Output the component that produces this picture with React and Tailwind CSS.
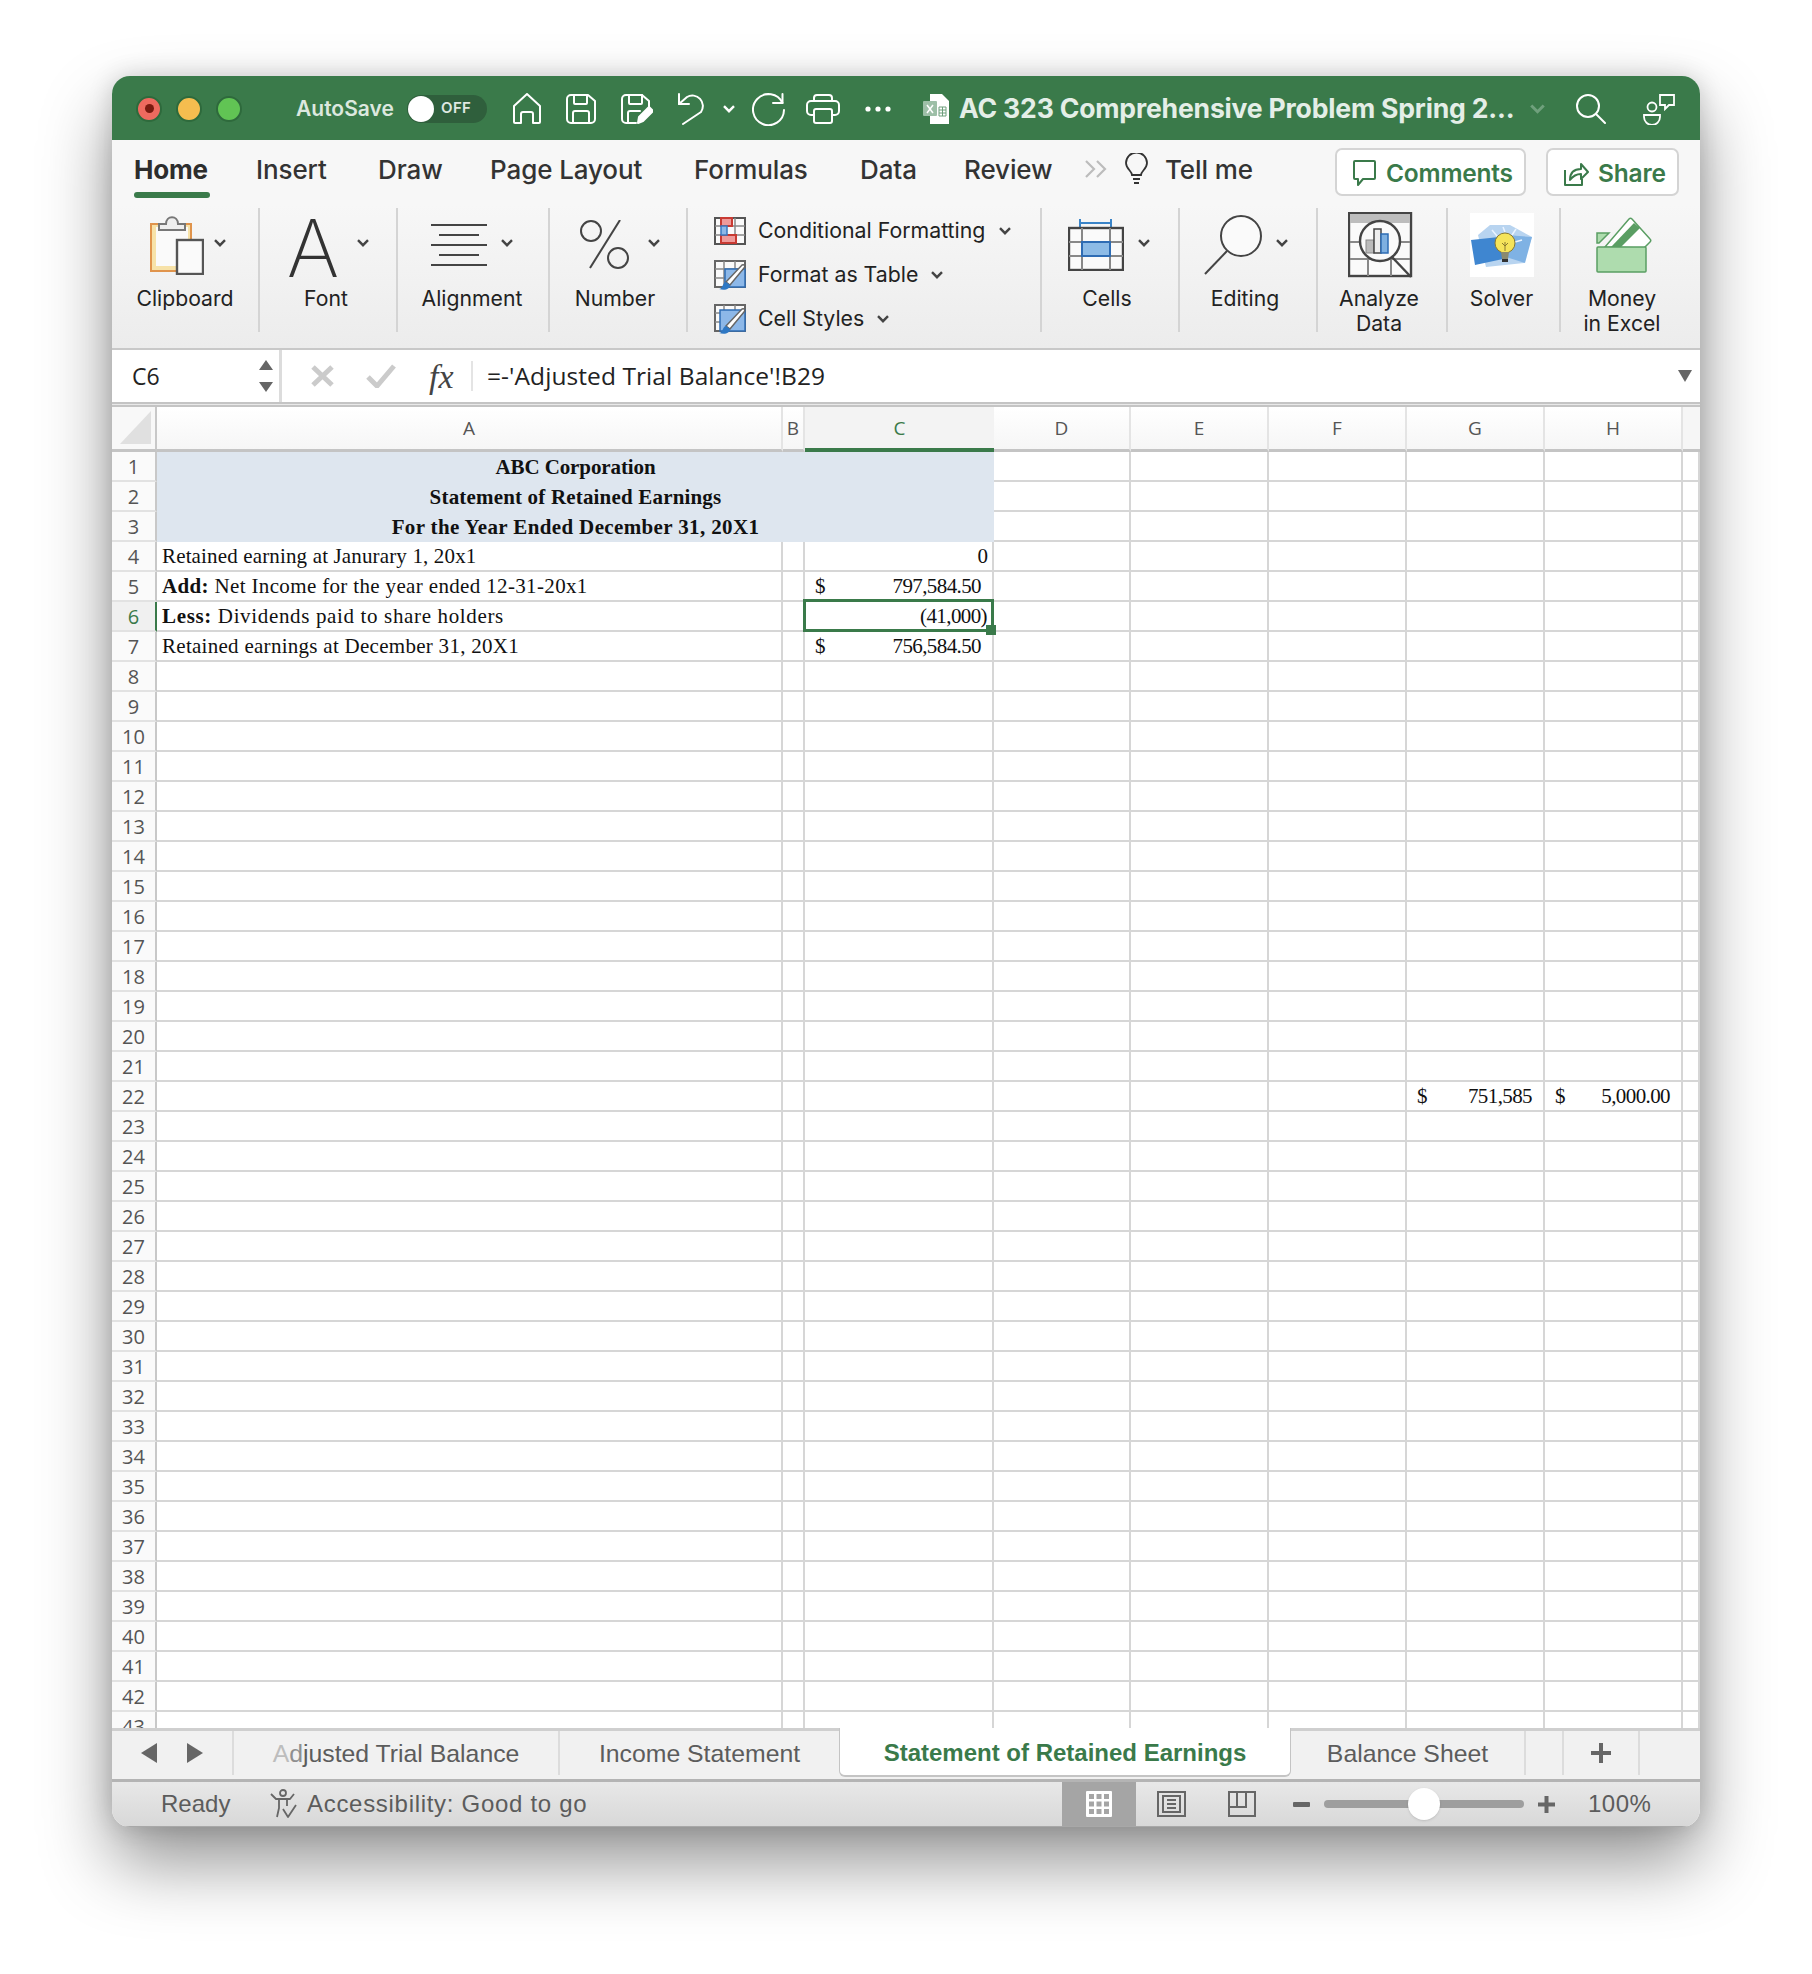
const rowNumbers = Array.from({ length: 43 }, (_, i) => i + 1);

const gridCols = "grid grid-cols-[45px_626px_22px_189px_137px_138px_138px_138px_138px_17px]";
const cellLine = "border-r-2 border-b-2 border-[#d6d6d6]";

function Chevron({ className = "", color = "#444" }) {
  return (
    <svg width="12" height="8" viewBox="0 0 12 8" className={className}>
      <path d="M1 1.2l5 5 5-5" fill="none" stroke={color} strokeWidth="2.4" />
    </svg>
  );
}

function TrafficLights() {
  return (
    <div className="flex gap-[14px] ml-[24px]">
      <div className="w-[26px] h-[26px] rounded-full bg-[#ee6a5f] border-2 border-[#2e6a3c] flex items-center justify-center">
        <div className="w-[9px] h-[9px] rounded-full bg-[#7a1a10]" />
      </div>
      <div className="w-[26px] h-[26px] rounded-full bg-[#f5bd4f] border-2 border-[#2e6a3c]" />
      <div className="w-[26px] h-[26px] rounded-full bg-[#61c454] border-2 border-[#2e6a3c]" />
    </div>
  );
}

function QuickIcons() {
  const s = { fill: "none", stroke: "#fff", strokeWidth: 2, strokeLinejoin: "round", strokeLinecap: "round" };
  return (
    <div className="flex items-center">
      <svg width="30" height="32" viewBox="0 0 30 32" className="ml-[25px]" {...s}>
        <path d="M2 29V13L15 1l13 12v16a1 1 0 0 1-1 1h-6v-9a2 2 0 0 0-2-2h-8a2 2 0 0 0-2 2v9H3a1 1 0 0 1-1-1z" />
      </svg>
      <svg width="30" height="30" viewBox="0 0 30 30" className="ml-[24px]" {...s}>
        <path d="M5 1h17l7 6v18a4 4 0 0 1-4 4H5a4 4 0 0 1-4-4V5a4 4 0 0 1 4-4z" />
        <path d="M8 1v8a1 1 0 0 0 1 1h11a1 1 0 0 0 1-1V1" />
        <path d="M7 29V19a2 2 0 0 1 2-2h12a2 2 0 0 1 2 2v10" />
      </svg>
      <svg width="32" height="30" viewBox="0 0 32 30" className="ml-[25px]" {...s}>
        <path d="M15 29H5a4 4 0 0 1-4-4V5a4 4 0 0 1 4-4h16l7 6v7" />
        <path d="M8 1v8a1 1 0 0 0 1 1h11a1 1 0 0 0 1-1V1" />
        <path d="M7 29V19a2 2 0 0 1 2-2h10" />
        <path d="M17 29l1-6 10-10 4 4-10 10z" fill="#fff" />
      </svg>
      <svg width="28" height="33" viewBox="0 0 28 33" className="ml-[24px]" {...s}>
        <path d="M2 2v10h10" />
        <path d="M2 12l8-7a10.500 10.500 0 0 1 14 15L6 32" />
      </svg>
      <Chevron color="#fff" className="ml-[18px]" />
      <svg width="34" height="34" viewBox="0 0 34 34" className="ml-[17px]" {...s}>
        <path d="M30.500 11A15.500 15.500 0 1 0 32 18" />
        <path d="M30.500 2v9H21" />
      </svg>
      <svg width="34" height="30" viewBox="0 0 34 30" className="ml-[20px]" {...s}>
        <path d="M8 21H5a4 4 0 0 1-4-4v-6a4 4 0 0 1 4-4h24a4 4 0 0 1 4 4v6a4 4 0 0 1-4 4h-3" />
        <path d="M8 7V4a3 3 0 0 1 3-3h12a3 3 0 0 1 3 3v3" />
        <rect x="8" y="15" width="18" height="14" rx="2" />
      </svg>
      <svg width="26" height="6" viewBox="0 0 26 6" className="ml-[25px]" fill="#fff">
        <circle cx="3" cy="3" r="2.600" />
        <circle cx="13" cy="3" r="2.600" />
        <circle cx="23" cy="3" r="2.600" />
      </svg>
      <svg width="26" height="30" viewBox="0 0 26 30" className="ml-[32px]">
        <path d="M7 0h12l7 7v23H7z" fill="#fff" />
        <rect x="0" y="7" width="14" height="15" rx="1" fill="#9dbfa7" />
        <path d="M4 11l6 8M10 11l-6 8" stroke="#fff" strokeWidth="1.500" />
        <path d="M16 13h7v9h-7zM16 16h7M16 19h7M19.500 13v9" fill="none" stroke="#6e9f7c" strokeWidth="1" />
      </svg>
    </div>
  );
}

function TitleBar() {
  const s = { fill: "none", stroke: "#fff", strokeWidth: 2, strokeLinecap: "round" };
  return (
    <div className="h-[64px] pt-[1px] bg-[#3a7a4a] flex items-center shrink-0">
      <TrafficLights />
      <span className="ml-[54px] w-[111px] text-[21px] font-semibold text-[#dce8df]">AutoSave</span>
      <div className="w-[80px] h-[28px] rounded-full bg-[#2f5f3c] flex items-center">
        <div className="w-[26px] h-[26px] rounded-full bg-white ml-[1px]" />
        <span className="ml-[7px] text-[15px] font-semibold tracking-wide text-[#dfe8e1]">OFF</span>
      </div>
      <QuickIcons />
      <span className="ml-[10px] w-[555px] text-[26.600px] font-bold text-[#e4eee7] whitespace-nowrap tracking-[-0.2px]">
        AC 323 Comprehensive Problem Spring 2...
      </span>
      <Chevron color="#6fa07c" className="ml-[16px] w-[15px] h-[10px]" />
      <svg width="30" height="30" viewBox="0 0 30 30" className="ml-[31px]" {...s}>
        <circle cx="12" cy="12" r="11" />
        <path d="M20 20l9 9" />
      </svg>
      <svg width="33" height="32" viewBox="0 0 33 32" className="ml-[37px]" {...s} strokeWidth="1.800">
        <circle cx="9" cy="14" r="4.500" />
        <path d="M1 22h16v2a7.500 7.500 0 0 1-16 0z" />
        <path d="M17 2h14v10h-5l-4 4v-4h-5z" />
      </svg>
    </div>
  );
}

function MenuTabs() {
  const text = "text-[26px] font-medium text-[#333] whitespace-nowrap tracking-[-0.1px]";
  return (
    <div className="h-[65px] flex items-start relative shrink-0">
      <div className="ml-[22px] w-[76px] pt-[10px]">
        <div className="text-[26px] font-bold text-[#2d2d2d] tracking-[-0.2px]">Home</div>
        <div className="h-[6px] rounded-full bg-[#3a7a4a] mt-[3px]" />
      </div>
      <span className={`${text} ml-[46px] w-[122px] pt-[10px]`}>Insert</span>
      <span className={`${text} w-[112px] pt-[10px]`}>Draw</span>
      <span className={`${text} w-[204px] pt-[10px]`}>Page Layout</span>
      <span className={`${text} w-[166px] pt-[10px]`}>Formulas</span>
      <span className={`${text} w-[104px] pt-[10px]`}>Data</span>
      <span className={`${text} w-[120px] pt-[10px]`}>Review</span>
      <svg width="24" height="18" viewBox="0 0 24 18" className="mt-[20px]" fill="none" stroke="#bcbcbc" strokeWidth="2.200">
        <path d="M2 1l8 8-8 8M13 1l8 8-8 8" />
      </svg>
      <svg width="23" height="31" viewBox="0 0 23 31" className="ml-[17px] mt-[13px]" fill="none" stroke="#333" strokeWidth="1.800">
        <path d="M7 22c0-4-6-6-6-12a10.500 10.500 0 0 1 21 0c0 6-6 8-6 12z" />
        <path d="M8 26h7M9 30h5" />
      </svg>
      <span className={`${text} ml-[17px] pt-[10px]`}>Tell me</span>
      <div className="absolute left-[1223px] top-[8px] w-[191px] h-[48px] rounded-[7px] bg-white border-2 border-[#d4d4d4] flex items-center pt-[2px]">
        <svg width="25" height="28" viewBox="0 0 25 28" className="ml-[15px]" fill="none" stroke="#3a7a4a" strokeWidth="2" strokeLinejoin="round">
          <path d="M3 2h19a1 1 0 0 1 1 1v16a1 1 0 0 1-1 1H11l-5 6v-6H3a1 1 0 0 1-1-1V3a1 1 0 0 1 1-1z" />
        </svg>
        <span className="ml-[9px] text-[24.500px] font-semibold text-[#3a7a4a] tracking-[-0.2px]">Comments</span>
      </div>
      <div className="absolute left-[1434px] top-[8px] w-[133px] h-[48px] rounded-[7px] bg-white border-2 border-[#d4d4d4] flex items-center pt-[2px]">
        <svg width="26" height="26" viewBox="0 0 26 26" className="ml-[15px]" fill="none" stroke="#3a7a4a" strokeWidth="2" strokeLinejoin="round">
          <path d="M2 10v15h17v-6" />
          <path d="M7 20c0-7 4-11 11-11V4l7 8-7 7v-5c-5 0-8 2-11 6z" />
        </svg>
        <span className="ml-[9px] text-[24.500px] font-semibold text-[#3a7a4a] tracking-[-0.2px]">Share</span>
      </div>
    </div>
  );
}

function RibbonGroup({ width, children, label, label2, last, iconShift = "", labelShift = "" }) {
  return (
    <div className={`${width} h-[124px] flex flex-col items-center relative shrink-0 ${last ? "" : "border-r-2 border-[#d4d4d4]"}`}>
      <div className={`h-[74px] shrink-0 flex items-center ${iconShift}`}>{children}</div>
      <div className={`text-[21.200px] leading-[25px] mt-[4px] text-[#222] text-center whitespace-nowrap ${labelShift}`}>
        {label}
        {label2 && <div>{label2}</div>}
      </div>
    </div>
  );
}

function ClipboardIcon() {
  return (
    <svg width="54" height="60" viewBox="0 0 54 60">
      <rect x="1" y="9" width="40" height="47" fill="#f7e2a8" stroke="#e0944c" strokeWidth="2" />
      <rect x="6" y="12" width="32" height="39" fill="#fafafa" />
      <path d="M9 15V9h7c0-9 12-9 12 0h7v6z" fill="#eee" stroke="#777" strokeWidth="2" />
      <rect x="27" y="25" width="26" height="34" fill="#fafafa" stroke="#555" strokeWidth="2.400" />
    </svg>
  );
}

function AlignIcon() {
  return (
    <svg width="56" height="42" viewBox="0 0 56 42" stroke="#444" strokeWidth="2">
      <path d="M0 1h56M8 11h40M0 21h56M8 31h40M0 41h56" />
    </svg>
  );
}

function PercentIcon() {
  return (
    <svg width="50" height="50" viewBox="0 0 50 50" fill="none" stroke="#444" strokeWidth="2">
      <ellipse cx="11" cy="11" rx="10" ry="10" />
      <ellipse cx="38" cy="38" rx="10" ry="10" />
      <path d="M10 48L40 0" />
    </svg>
  );
}

function ConditionalIcon() {
  return (
    <svg width="32" height="28" viewBox="0 0 32 28">
      <rect x="1" y="1" width="30" height="26" fill="#fafafa" stroke="#555" strokeWidth="2" />
      <path d="M1 9h30M1 18h30M10 1v26M21 1v26" stroke="#888" strokeWidth="1.500" />
      <rect x="7" y="1" width="11" height="8" fill="#ee9a9a" stroke="#c83a32" strokeWidth="2" />
      <rect x="7" y="18" width="15" height="8" fill="#ee9a9a" stroke="#c83a32" strokeWidth="2" />
      <rect x="7" y="9" width="6" height="9" fill="#8db8e8" stroke="#3a78c0" strokeWidth="1.500" />
    </svg>
  );
}

function Brush() {
  return (
    <g>
      <path d="M12 22L28 5c2-1 4 1 2 3L16 25z" fill="#fff" stroke="#666" strokeWidth="1.500" />
      <path d="M5 29c4 0 3-6 7-7l4 3c0 4-5 6-11 4z" fill="#2e78c4" />
    </g>
  );
}

function TableIcon() {
  return (
    <svg width="34" height="30" viewBox="0 0 34 30">
      <rect x="1" y="1" width="30" height="26" fill="#fafafa" stroke="#666" strokeWidth="2" />
      <path d="M1 9h30M1 18h30M10 1v26M21 1v26" stroke="#888" strokeWidth="1.500" />
      <rect x="11" y="9" width="20" height="18" fill="#8db8e8" stroke="#2e6cb4" strokeWidth="1.500" />
      <Brush />
    </svg>
  );
}

function StylesIcon() {
  return (
    <svg width="34" height="30" viewBox="0 0 34 30">
      <rect x="1" y="1" width="30" height="26" fill="#fafafa" stroke="#666" strokeWidth="2" />
      <path d="M1 9h30M1 18h9M10 1v26M21 1v8" stroke="#888" strokeWidth="1.500" />
      <rect x="6" y="6" width="25" height="21" fill="#8db8e8" stroke="#2e6cb4" strokeWidth="1.500" />
      <Brush />
    </svg>
  );
}

function CellsIcon() {
  return (
    <svg width="56" height="52" viewBox="0 0 56 52">
      <path d="M12 4h31M12 0v8M43 0v8" stroke="#3a84c8" strokeWidth="2" />
      <rect x="1" y="9" width="54" height="42" fill="#fafafa" stroke="#444" strokeWidth="2.400" />
      <path d="M1 23h54M1 37h54M14 9v42M42 9v42" stroke="#888" strokeWidth="2" />
      <rect x="14" y="23" width="28" height="14" fill="#8dbbe6" stroke="#2e6cb4" strokeWidth="2" />
    </svg>
  );
}

function MagnifierIcon() {
  return (
    <svg width="58" height="60" viewBox="0 0 58 60" fill="none" stroke="#444" strokeWidth="2">
      <circle cx="37" cy="21" r="20" fill="#fafafa" />
      <path d="M23 36L1 59" />
    </svg>
  );
}

function AnalyzeIcon() {
  return (
    <svg width="66" height="66" viewBox="0 0 66 66">
      <rect x="1" y="1" width="62" height="63" fill="#fafafa" stroke="#444" strokeWidth="2.400" />
      <rect x="2" y="2" width="60" height="9" fill="#bdbdbd" />
      <path d="M2 30h60M2 47h60M20 47v17M43 47v17" stroke="#888" strokeWidth="2" />
      <circle cx="32" cy="29" r="20" fill="#fafafa" stroke="#444" strokeWidth="2.400" />
      <rect x="18" y="28" width="8" height="13" fill="#bbb" stroke="#888" />
      <rect x="26" y="17" width="7" height="24" fill="#eee" stroke="#444" strokeWidth="1.500" />
      <rect x="33" y="22" width="7" height="19" fill="#7fb0e0" stroke="#2e6cb4" strokeWidth="1.500" />
      <path d="M44 45l19 20" stroke="#444" strokeWidth="2.400" />
    </svg>
  );
}

function SolverIcon() {
  return (
    <svg width="64" height="64" viewBox="0 0 64 64">
      <rect width="64" height="64" fill="#fff" />
      <path d="M8 22L20 12h20l22 12-8 26-38 4z" fill="#b8d4f0" />
      <path d="M1 27l28-3 4 22-28 6z" fill="#3f86d0" />
      <path d="M36 22l26 2-7 26-19-6z" fill="#7fb2e4" />
      <path d="M33 14l2 5M22 17l5 6M46 16l-4 6M52 27l-7 2" stroke="#eaf4ff" strokeWidth="1.500" />
      <circle cx="35" cy="30" r="10" fill="#f5e45a" stroke="#8a7a30" strokeWidth="1" />
      <path d="M31 39h8l-1 7h-6z" fill="#8a8a70" />
      <path d="M32 46h6v3h-6z" fill="#333" />
      <path d="M35 38v-9M32 30l3 3 3-3" fill="none" stroke="#8a7a30" strokeWidth="1" />
    </svg>
  );
}

function MoneyIcon() {
  return (
    <svg width="56" height="56" viewBox="0 0 56 56">
      <path d="M1 16h12l-10 10H1z" fill="#aedcae" stroke="#5a9e63" strokeWidth="1.500" />
      <path d="M9 30L33 2c1-1 2-1 3 0l18 20c1 1 1 2 0 3l-6 6z" fill="#fff" stroke="#5a9e63" strokeWidth="1.500" />
      <path d="M15 30L38 6l6 5-20 20z" fill="#5a9e63" />
      <rect x="1" y="30" width="49" height="25" rx="1" fill="#aedcae" stroke="#5a9e63" strokeWidth="1.500" />
    </svg>
  );
}

function StyleRow({ icon, label, chevronClass }) {
  return (
    <div className="flex items-center h-[44px]">
      <div className="w-[44px] flex">{icon}</div>
      <span className="text-[21.300px] text-[#222] whitespace-nowrap">{label}</span>
      <Chevron className={chevronClass} />
    </div>
  );
}

function Ribbon() {
  return (
    <div className="flex h-[143px] shrink-0 items-start bg-gradient-to-b from-[#f7f7f7] to-[#ececec] pt-[3px]">
      <RibbonGroup width="w-[148px]" label="Clipboard" iconShift="translate-x-[3px]">
        <ClipboardIcon />
        <Chevron className="ml-[10px] mb-[4px]" />
      </RibbonGroup>
      <RibbonGroup width="w-[138px]" label="Font" labelShift="-translate-x-[2px]">
        <span className="text-[80px] leading-[68px] mt-[6px] font-extralight text-[#333]">A</span>
        <Chevron className="ml-[18px] mb-[4px]" />
      </RibbonGroup>
      <RibbonGroup width="w-[152px]" label="Alignment" iconShift="-translate-x-[1px]" labelShift="-translate-x-[1px]">
        <AlignIcon />
        <Chevron className="ml-[14px] mb-[4px]" />
      </RibbonGroup>
      <RibbonGroup width="w-[138px]" label="Number" iconShift="translate-x-[2px]" labelShift="-translate-x-[3px]">
        <PercentIcon />
        <Chevron className="ml-[18px] mb-[4px]" />
      </RibbonGroup>
      <div className="w-[354px] h-[124px] shrink-0 border-r-2 border-[#d4d4d4] pl-[26px] pt-[1px]">
        <StyleRow icon={<ConditionalIcon />} label="Conditional Formatting" chevronClass="ml-[14px]" />
        <StyleRow icon={<TableIcon />} label="Format as Table" chevronClass="ml-[13px]" />
        <StyleRow icon={<StylesIcon />} label="Cell Styles" chevronClass="ml-[13px]" />
      </div>
      <RibbonGroup width="w-[138px]" label="Cells" iconShift="-translate-x-[1px]" labelShift="-translate-x-[3px]">
        <CellsIcon />
        <Chevron className="ml-[14px] mb-[4px]" />
      </RibbonGroup>
      <RibbonGroup width="w-[138px]" label="Editing" iconShift="-translate-x-[2px]" labelShift="-translate-x-[3px]">
        <MagnifierIcon />
        <Chevron className="ml-[14px] mb-[4px]" />
      </RibbonGroup>
      <RibbonGroup width="w-[130px]" label="Analyze" label2="Data" iconShift="-translate-x-[1px]" labelShift="-translate-x-[3px]">
        <AnalyzeIcon />
      </RibbonGroup>
      <RibbonGroup width="w-[113px]" label="Solver" iconShift="-translate-x-[2px]" labelShift="-translate-x-[2px]">
        <SolverIcon />
      </RibbonGroup>
      <RibbonGroup width="w-[138px]" label="Money" label2="in Excel" iconShift="-translate-x-[6px]" labelShift="-translate-x-[8px]" last>
        <MoneyIcon />
      </RibbonGroup>
    </div>
  );
}

function FormulaBar() {
  return (
    <div className="shrink-0">
      <div className="h-[2px] bg-[#c8c8c8]" />
      <div className="h-[52px] flex items-center bg-white">
        <div className="w-[170px] h-full flex items-center justify-between border-r-[3px] border-[#dcdcdc] pl-[20px] pr-[6px]">
          <span className="text-[23px] text-[#222] font-['Open_Sans',sans-serif]">C6</span>
          <svg width="14" height="32" viewBox="0 0 14 32" fill="#666">
            <path d="M7 0l7 10H0zM7 32l7-10H0z" />
          </svg>
        </div>
        <svg width="23" height="22" viewBox="0 0 23 22" className="ml-[29px]" stroke="#cbcbcb" strokeWidth="5">
          <path d="M2 2l19 18M21 2L2 20" />
        </svg>
        <svg width="30" height="24" viewBox="0 0 30 24" className="ml-[32px]" fill="none" stroke="#cbcbcb" strokeWidth="5">
          <path d="M2 13l9 9L28 2" />
        </svg>
        <span className="ml-[33px] w-[42px] text-[34px] italic text-[#444] font-['Liberation_Serif',serif]">fx</span>
        <div className="w-[2px] h-[30px] bg-[#e4e4e4]" />
        <span className="ml-[14px] text-[24.500px] text-[#222] font-['Open_Sans',sans-serif] tracking-[0.08px]">=-'Adjusted Trial Balance'!B29</span>
        <svg width="14" height="12" viewBox="0 0 14 12" className="ml-auto mr-[8px]" fill="#666">
          <path d="M0 0h14L7 12z" />
        </svg>
      </div>
      <div className="h-[5px] bg-[#e8e8e8] border-y-2 border-[#c4c4c4]" />
    </div>
  );
}

function ColumnHeaders() {
  const heads = ["A", "B", "C", "D", "E", "F", "G", "H"];
  return (
    <div className={`${gridCols} h-[45px] shrink-0`}>
      <div className="border-r-2 border-b-[3px] border-r-[#c8c8c8] border-b-[#c4c4c4] bg-[#f8f8f8] flex items-end justify-end pr-[4px] pb-[5px]">
        <svg width="31" height="33" viewBox="0 0 31 33" fill="#e0e0e0">
          <path d="M31 0v33H0z" />
        </svg>
      </div>
      {heads.map((h) =>
        h === "C" ? (
          <div key={h} className="bg-[#f3f3f3] border-b-4 border-[#3a7a4a] text-[#3a7a4a] text-[19px] pt-[1px] flex items-center justify-center font-['Open_Sans',sans-serif]">
            {h}
          </div>
        ) : (
          <div key={h} className="bg-gradient-to-b from-white to-[#f6f6f6] border-b-[3px] border-r-2 border-b-[#c4c4c4] border-r-[#e4e4e4] text-[#555] text-[19px] pt-[1px] flex items-center justify-center font-['Open_Sans',sans-serif]">
            {h}
          </div>
        )
      )}
      <div className="bg-[#f6f6f6] border-b-[3px] border-[#c4c4c4]" />
    </div>
  );
}

function RowHead({ n, active }) {
  return (
    <div className={`text-[20px] leading-none pt-[1px] flex items-center justify-center border-b-2 border-b-[#e2e2e2] border-r-2 font-['Open_Sans',sans-serif] ${active ? "bg-[#f0f0f0] text-[#3a7a4a] border-r-[#3a7a4a]" : "bg-[#fafafa] text-[#555] border-r-[#c8c8c8]"}`}>
      {n}
    </div>
  );
}

function Blank({ n = 9 }) {
  return Array.from({ length: n }, (_, i) => <div key={i} className={cellLine} />);
}

function Accounting({ value }) {
  return (
    <div className={`${cellLine} pt-[1px] flex items-center justify-between pl-[10px] pr-[11px]`}>
      <span>$</span>
      <span className="tracking-[-0.6px]">{value}</span>
    </div>
  );
}

function Row({ n }) {
  const serif = "text-[21px] leading-none text-[#111] font-['Liberation_Serif',serif]";
  if (n <= 3) {
    const titles = [
      { text: "ABC Corporation", track: "tracking-[-0.1px]" },
      { text: "Statement of Retained Earnings", track: "tracking-[0.18px]" },
      { text: "For the Year Ended December 31, 20X1", track: "tracking-[0.37px]" },
    ];
    const title = titles[n - 1];
    return (
      <div className={`${gridCols} h-[30px] ${serif}`}>
        <RowHead n={n} />
        <div className={`col-span-3 pt-[1px] bg-[#dee6ef] flex items-center justify-center font-bold ${title.track}`}>{title.text}</div>
        <Blank n={6} />
      </div>
    );
  }
  const leftText = {
    4: { body: "Retained earning at Janurary 1, 20x1", track: "tracking-[0.15px]" },
    5: { body: <span><b>Add:</b> Net Income for the year ended 12-31-20x1</span>, track: "tracking-[0.35px]" },
    6: { body: <span><b>Less:</b> Dividends paid to share holders</span>, track: "tracking-[0.65px]" },
    7: { body: "Retained earnings at December 31, 20X1", track: "tracking-[0.28px]" },
  };
  if (n >= 4 && n <= 7) {
    return (
      <div className={`${gridCols} h-[30px] ${serif}`}>
        <RowHead n={n} active={n === 6} />
        <div className={`${cellLine} pt-[1px] flex items-center pl-[5px] whitespace-nowrap ${leftText[n].track}`}>{leftText[n].body}</div>
        <div className={cellLine} />
        {n === 4 && <div className={`${cellLine} pt-[1px] flex items-center justify-end pr-[4px]`}>0</div>}
        {n === 5 && <Accounting value="797,584.50" />}
        {n === 6 && (
          <div className={`${cellLine} pt-[1px] relative flex items-center justify-end pr-[5px] tracking-[-0.6px]`}>
            (41,000)
            <div className="absolute -left-[2px] -right-[2px] -top-[3px] -bottom-[2px] border-[3px] border-[#3a7a4a] z-10" />
            <div className="absolute -right-[4px] -bottom-[5px] w-[10px] h-[10px] bg-[#3a7a4a] z-20" />
          </div>
        )}
        {n === 7 && <Accounting value="756,584.50" />}
        <Blank n={6} />
      </div>
    );
  }
  if (n === 22) {
    return (
      <div className={`${gridCols} h-[30px] ${serif}`}>
        <RowHead n={n} />
        <Blank n={6} />
        <Accounting value="751,585" />
        <Accounting value="5,000.00" />
        <div className={cellLine} />
      </div>
    );
  }
  return (
    <div className={`${gridCols} h-[30px]`}>
      <RowHead n={n} />
      <Blank />
    </div>
  );
}

function SheetTabs() {
  const text = "text-[24.800px] pt-[1px] text-[#5c5c5c] font-['Liberation_Sans',sans-serif] whitespace-nowrap";
  const cell = "h-[44px] flex items-center justify-center border-r-2 border-[#dcdcdc]";
  return (
    <div className="h-[54px] shrink-0 flex items-start bg-[#f1f1f1] border-t-[3px] border-b-[3px] border-t-[#cfcfcf] border-b-[#b4b4b4] relative z-20">
      <div className={`${cell} w-[122px] gap-[30px]`}>
        <svg width="16" height="20" viewBox="0 0 16 20" fill="#666"><path d="M16 0v20L0 10z" /></svg>
        <svg width="16" height="20" viewBox="0 0 16 20" fill="#666"><path d="M0 0v20l16-10z" /></svg>
      </div>
      <div className={`${cell} w-[326px] ${text}`}>
        <span><span className="text-[#bdbdbd]">A</span><span className="text-[#8f8f8f]">d</span>justed Trial Balance</span>
      </div>
      <div className={`${cell} w-[279px] ${text} border-none`}>Income Statement</div>
      <div className="w-[452px] h-[49px] -mt-[3px] pt-[2px] bg-white rounded-b-[6px] border-b-2 border-x border-[#c4c4c4] flex items-center justify-center text-[24px] font-bold text-[#3a7a4a] font-['Liberation_Sans',sans-serif] whitespace-nowrap">
        Statement of Retained Earnings
      </div>
      <div className={`${cell} w-[235px] ${text}`}>Balance Sheet</div>
      <div className={`${cell} w-[38px]`} />
      <div className={`${cell} w-[76px]`}>
        <svg width="20" height="20" viewBox="0 0 20 20" fill="#666"><path d="M8 0h4v8h8v4h-8v8H8v-8H0V8h8z" /></svg>
      </div>
    </div>
  );
}

function StatusBar() {
  const text = "text-[24px] text-[#5c5c5c] font-['Liberation_Sans',sans-serif] whitespace-nowrap";
  return (
    <div className="h-[45px] shrink-0 flex items-center bg-gradient-to-b from-[#e8e8e8] to-[#d8d8d8] border-b border-[#a8a8a8]">
      <span className={`${text} ml-[49px] w-[109px]`}>Ready</span>
      <svg width="32" height="30" viewBox="0 0 32 30" fill="none" stroke="#666" strokeWidth="1.800" strokeLinejoin="round">
        <circle cx="13" cy="4" r="3" />
        <path d="M1 5l5 5h14l4-5M9 11v8l-2 9M17 11v6" />
        <path d="M13 20l5 8 8-12" />
      </svg>
      <span className={`${text} ml-[5px] w-[755px] tracking-[0.7px]`}>Accessibility: Good to go</span>
      <div className="w-[74px] h-full bg-[#a5a5a5] flex items-center justify-center">
        <svg width="26" height="26" viewBox="0 0 26 26">
          <rect width="26" height="26" rx="1" fill="#fff" />
          <path d="M3 3h5v5H3zM10.500 3h5v5h-5zM18 3h5v5h-5zM3 10.500h5v5H3zM10.500 10.500h5v5h-5zM18 10.500h5v5h-5zM3 18h5v5H3zM10.500 18h5v5h-5zM18 18h5v5h-5z" fill="#a5a5a5" />
        </svg>
      </div>
      <svg width="29" height="26" viewBox="0 0 29 26" className="ml-[21px]" fill="none" stroke="#666" strokeWidth="2">
        <rect x="1" y="1" width="27" height="24" />
        <rect x="6" y="5" width="17" height="16" />
        <path d="M10 9h9M10 13h9M10 17h9" />
      </svg>
      <svg width="28" height="26" viewBox="0 0 28 26" className="ml-[42px]" fill="none" stroke="#666" strokeWidth="2">
        <rect x="1" y="1" width="26" height="24" />
        <path d="M9 1v15h9V1M1 16h8" />
      </svg>
      <div className="ml-[37px] w-[17px] h-[5px] bg-[#666] rounded-[1px]" />
      <div className="ml-[14px] w-[200px] h-[8px] rounded-full bg-[#9e9e9e] relative">
        <div className="absolute left-[84px] -top-[12px] w-[32px] h-[32px] rounded-full bg-white shadow" />
      </div>
      <svg width="17" height="17" viewBox="0 0 17 17" className="ml-[14px]" fill="#666"><path d="M6.500 0h4v6.500H17v4h-6.500V17h-4v-6.500H0v-4h6.500z" /></svg>
      <span className={`${text} ml-[33px] tracking-[0.5px]`}>100%</span>
    </div>
  );
}

export default function App() {
  return (
    <div className="min-h-[1974px] w-[1812px] bg-white pt-[76px] pl-[112px] font-['Inter',sans-serif]">
      <div className="w-[1588px] h-[1751px] rounded-[18px] overflow-hidden flex flex-col bg-white shadow-[0_36px_70px_rgba(0,0,0,0.42),0_0_24px_rgba(0,0,0,0.16)]">
        <TitleBar />
        <div className="bg-[#f7f7f7] shrink-0">
          <MenuTabs />
          <Ribbon />
        </div>
        <FormulaBar />
        <ColumnHeaders />
        <div className="flex-1 overflow-hidden">
          {rowNumbers.map((n) => (
            <Row key={n} n={n} />
          ))}
        </div>
        <SheetTabs />
        <StatusBar />
      </div>
    </div>
  );
}
